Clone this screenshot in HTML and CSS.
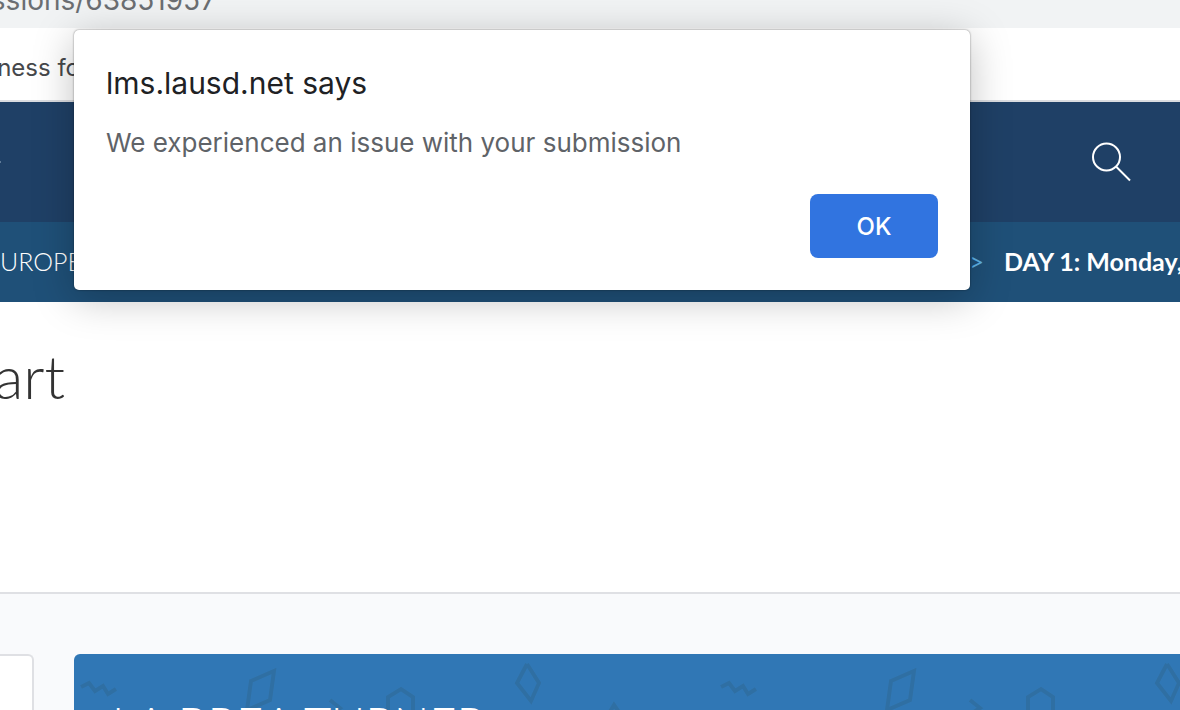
FILE: index.html
```html
<!DOCTYPE html>
<html lang="en">
<head>
  <meta charset="UTF-8">
  <meta name="viewport" content="width=device-width, initial-scale=1.0">
  <title>Submission</title>
  <link rel="stylesheet" href="styles.css">
</head>
<body>
  <div class="address-bar"><span>ssions/63851957</span></div>
  <div class="bookmarks"><a href="#">ness fo</a></div>

  <nav class="site-nav">
    <span class="nav-mark"></span>
    <button type="button" class="search-btn" aria-label="Search">
      <svg viewBox="0 0 40 40" width="40" height="40" fill="none" stroke="#fff" stroke-width="2">
        <circle cx="14.500" cy="15" r="13.500"/>
        <path d="M24 24.500L38 38.500"/>
      </svg>
    </button>
  </nav>

  <nav class="breadcrumbs">
    <a href="#" class="course">UROPE</a>
    <span class="sep">&gt;</span>
    <a href="#" class="current">DAY 1: Monday,</a>
  </nav>

  <header class="page-header">
    <h1>art</h1>
  </header>

  <main class="content">
    <aside class="side-card"></aside>
    <section class="banner">
      <svg class="banner-pattern" width="100%" height="100%" aria-hidden="true">
        <defs>
          <pattern id="shapes" width="640" height="200" patternUnits="userSpaceOnUse">
            <g fill="none" stroke="#2f6fa3" stroke-width="4">
              <path d="M7 33L15 29L21 37L29 32L34 40L42 35"/>
              <path d="M177 27L200 17L196 46L173 56Z"/>
              <path d="M256 46L266 54L254 62"/>
              <path d="M314 64V43L327 35L339 43V64L327 72Z"/>
              <path d="M453 10L465 29L457 47L443 29L453 10"/>
              <path d="M534 61L540 51L547 61"/>
            </g>
          </pattern>
        </defs>
        <rect width="100%" height="100%" fill="url(#shapes)"/>
      </svg>
      <h2>LA BREA TURNER</h2>
    </section>
  </main>

  <dialog class="alert" open aria-labelledby="alert-title">
    <h2 id="alert-title">lms.lausd.net says</h2>
    <p>We experienced an issue with your submission</p>
    <form method="dialog">
      <button class="ok-btn">OK</button>
    </form>
  </dialog>
</body>
</html>
```
FILE: styles.css
```css
* {
  box-sizing: border-box;
}
body {
  display: flex;
  flex-direction: column;
  height: 100vh;
  margin: 0;
  overflow: hidden;
  background-color: #f9fafc;
  font-family: Lato, "Open Sans", sans-serif;
}
h1, h2, p {
  margin: 0;
}
a {
  color: inherit;
  text-decoration: none;
}
.address-bar,
.bookmarks,
.site-nav,
.breadcrumbs,
.page-header {
  flex: none;
}
.address-bar {
  display: flex;
  align-items: flex-end;
  justify-content: flex-end;
  width: 100%;
  height: 28px;
  padding-right: calc(100% - 216px);
  background-color: #f1f3f4;
  color: #6b6e72;
  font: 28px/40px Inter, sans-serif;
  white-space: nowrap;
  overflow: hidden;
}
.address-bar span {
  padding-bottom: 8px;
}
.bookmarks {
  display: flex;
  justify-content: flex-end;
  height: 74px;
  padding-top: 20px;
  padding-right: calc(100% - 80px);
  border-bottom: 2px solid #dadce0;
  background-color: #fff;
  color: #46484b;
  font: 24px/40px Inter, sans-serif;
  white-space: nowrap;
}
.site-nav {
  display: flex;
  align-items: center;
  justify-content: space-between;
  height: 120px;
  padding-right: 48px;
  background-color: #1f4066;
}
.nav-mark {
  width: 1px;
  height: 2px;
  background-color: #5f7b98;
}
.search-btn {
  padding: 0;
  border: none;
  background: none;
  line-height: 0;
  cursor: pointer;
}
.breadcrumbs {
  display: flex;
  align-items: center;
  height: 80px;
  padding-bottom: 2px;
  background-color: #1f5078;
  color: #fff;
  font-size: 25px;
  white-space: nowrap;
}
.course {
  font-weight: 300;
}
.sep {
  margin-left: auto;
  color: #5fb5ea;
  font-weight: 400;
}
.current {
  width: 176px;
  margin-left: 20px;
  font-weight: 700;
}
.page-header {
  display: flex;
  height: 292px;
  padding-top: 40px;
  border-bottom: 2px solid #dfe0e4;
  background-color: #fff;
}
.page-header h1 {
  display: flex;
  justify-content: flex-end;
  width: 65px;
  color: #333;
  font-size: 60px;
  font-weight: 300;
  line-height: 68px;
}
.content {
  display: flex;
  flex: 1;
  gap: 40px;
  min-height: 0;
  padding-top: 60px;
}
.side-card {
  width: 34px;
  border: 2px solid #dfe0e4;
  border-left: none;
  border-bottom: none;
  border-top-right-radius: 6px;
  background-color: #fff;
}
.banner {
  position: relative;
  flex: 1;
  padding: 40px 38px 0;
  border-top-left-radius: 6px;
  background-color: #3077b5;
  overflow: hidden;
}
.banner-pattern {
  position: absolute;
  inset: 0;
}
.banner h2 {
  position: relative;
  color: #fff;
  font-size: 47px;
  font-weight: 300;
  line-height: 60px;
}
.alert {
  position: absolute;
  top: 30px;
  left: 74px;
  width: calc(100% - 284px);
  margin: 0;
  padding: 32px;
  border: none;
  border-radius: 5px;
  background-color: #fff;
  box-shadow: 0 0 2px rgba(0, 0, 0, 0.5), 0 8px 40px rgba(0, 0, 0, 0.25);
  font-family: Inter, sans-serif;
}
.alert h2 {
  color: #202124;
  font-size: 30px;
  font-weight: 400;
  line-height: 42px;
}
.alert p {
  padding-top: 18px;
  color: #5f6368;
  font-size: 26px;
  line-height: 42px;
}
.alert form {
  display: flex;
  justify-content: flex-end;
  padding-top: 30px;
}
.ok-btn {
  width: 128px;
  height: 64px;
  border: none;
  border-radius: 8px;
  background-color: #3174e0;
  color: #fff;
  font: 500 24px Inter, sans-serif;
  cursor: pointer;
}
```
